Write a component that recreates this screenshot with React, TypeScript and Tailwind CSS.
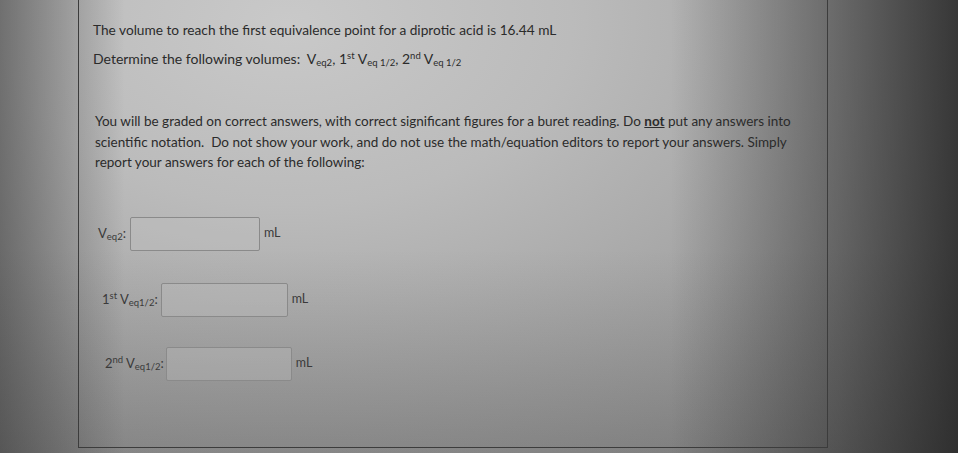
import React from "react";

function Sub({ children }: { children: React.ReactNode }) {
  return <sub className="text-[9.5px] leading-none">{children}</sub>;
}
function Sup({ children }: { children: React.ReactNode }) {
  return <sup className="text-[9.5px] leading-none">{children}</sup>;
}

function Row({
  indent,
  label,
  boxW,
  top,
}: {
  indent: string;
  label: React.ReactNode;
  boxW: string;
  top: string;
}) {
  return (
    <div className={`flex items-center ${indent} ${top}`}>
      <div className="text-[13px] text-[#3a3a3a] whitespace-nowrap">{label}</div>
      <div className={`h-[34px] ${boxW} border border-[#8a8a8a] rounded-[2px] bg-[#c4c4c4]/30`} />
      <div className="ml-[4px] text-[12.5px] text-[#3a3a3a]">mL</div>
    </div>
  );
}

export default function App() {
  return (
    <div
      className="relative w-[958px] h-[453px] overflow-hidden bg-[radial-gradient(ellipse_at_30%_5%,#c9c9c9_0%,#bbbbbb_30%,#a4a4a4_60%,#858585_100%)]"
      style={{ fontFamily: "Lato, 'Open Sans', sans-serif" }}
    >
      <div className="absolute inset-0 bg-[linear-gradient(180deg,rgba(0,0,0,0)_0%,rgba(0,0,0,0)_55%,rgba(40,40,40,0.18)_100%)]" />
      <div className="absolute inset-0 bg-[linear-gradient(90deg,rgba(50,50,50,0.55)_0%,rgba(0,0,0,0)_13%,rgba(0,0,0,0)_70%,rgba(40,40,40,0.5)_88%,rgba(30,30,30,0.8)_100%)]" />
      <div className="relative ml-[78px] w-[750px] h-[448px] border-l border-r border-b border-[#3c3c3c] pl-[14px] pt-[20px] text-[#2b2b2b]">
        <div className="text-[13.7px] leading-[20px]">
          The volume to reach the first equivalence point for a diprotic acid is 16.44 mL
        </div>
        <div className="mt-[9px] text-[14px] leading-[20px]">
          Determine the following volumes:&nbsp;&nbsp;V<Sub>eq2</Sub>, 1<Sup>st</Sup> V
          <Sub>eq 1/2</Sub>, 2<Sup>nd</Sup> V<Sub>eq 1/2</Sub>
        </div>
        <div className="mt-[42px] ml-[2px] w-[705px] text-[13.5px] leading-[20.5px]">
          <span>You will be graded on correct answers, with correct significant figures for a buret reading. Do </span>
          <span className="font-bold underline">not</span>
          <span> put any answers into</span>{" "}
          <span>
            scientific notation.&nbsp; Do not show your work, and do not use the math/equation editors to report
            your answers. Simply report your answers for each of the following:
          </span>
        </div>
        <Row
          indent="ml-[5px]"
          top="mt-[44px]"
          boxW="w-[130px]"
          label={
            <span className="mr-[4px]">
              V<Sub>eq2</Sub>:
            </span>
          }
        />
        <Row
          indent="ml-[9px]"
          top="mt-[32px]"
          boxW="w-[127px]"
          label={
            <span className="mr-[3px]">
              1<Sup>st</Sup> V<Sub>eq1/2</Sub>:
            </span>
          }
        />
        <Row
          indent="ml-[12px]"
          top="mt-[30px]"
          boxW="w-[126px]"
          label={
            <span className="mr-[2px]">
              2<Sup>nd</Sup> V<Sub>eq1/2</Sub>:
            </span>
          }
        />
      </div>
    </div>
  );
}
